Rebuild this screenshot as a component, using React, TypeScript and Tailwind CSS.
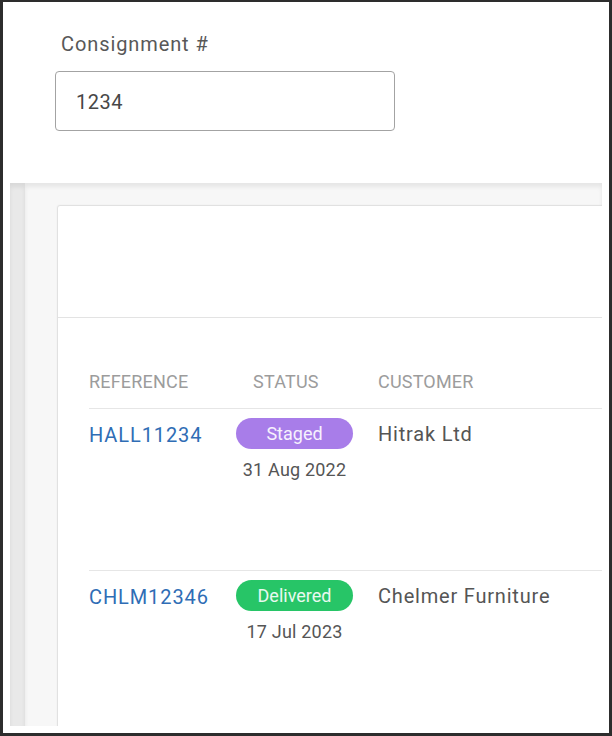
const ROWS = [
  {
    ref: "HALL11234",
    status: "Staged",
    badge: "bg-[#a87de9]",
    date: "31 Aug 2022",
    customer: "Hitrak Ltd",
  },
  {
    ref: "CHLM12346",
    status: "Delivered",
    badge: "bg-[#27c567]",
    date: "17 Jul 2023",
    customer: "Chelmer Furniture",
  },
] as const;

export default function App() {
  return (
    <div className="h-[736px] w-[612px] overflow-hidden bg-[#2d2d2d] pb-[3px] pl-[3px] pr-[3px] pt-[2px] font-['Roboto',sans-serif]">
      <div className="flex h-full flex-col overflow-hidden bg-white">
        {/* search form */}
        <div className="pl-[52px] pt-[30px]">
          <div className="pl-[6px] text-[20px] leading-6 tracking-[0.9px] text-[#585858]">Consignment #</div>
          <div className="mt-[15px] flex h-[60px] w-[340px] items-center rounded-[4px] border border-[#a3a3a3] pl-[20px] pt-[2px] text-[20px] tracking-[0.5px] text-[#474747]">
            1234
          </div>
        </div>

        {/* results panel */}
        <div className="mx-[7px] mt-[52px] flex h-[543px] overflow-hidden">
          <div className="w-[15px] shrink-0 bg-[#e9e9e9] shadow-[inset_0_4px_4px_rgba(0,0,0,0.07)]" />
          <div className="flex-1 overflow-hidden bg-[#f7f7f7] pl-[32px] pt-[22px] shadow-[inset_0_4px_4px_rgba(0,0,0,0.07)]">
            <div className="h-[700px] w-[620px] rounded-tl-[3px] border border-[#e1e1e1] bg-white shadow-[0_0_2px_rgba(0,0,0,0.06)]">
              <div className="h-[112px] border-b border-[#e3e3e3]" />

              <div className="pl-[31px]">
                <div className="flex border-b border-[#e6e6e6] pb-[14px] pt-[52px] text-[18px] leading-6 tracking-[0.2px] text-[#9c9c9c]">
                  <div className="w-[147px]">REFERENCE</div>
                  <div className="w-[142px] pl-[17px]">STATUS</div>
                  <div>CUSTOMER</div>
                </div>

                {ROWS.map((row, i) => (
                  <div
                    key={row.ref}
                    className={
                      i === 0
                        ? "flex h-[162px] items-start border-b border-[#e6e6e6] pt-[9px]"
                        : "flex h-[162px] items-start pt-[9px]"
                    }
                  >
                    <div className="w-[147px] pt-[2px] text-[20px] leading-[31px] tracking-[0.9px] text-[#2f6db5]">
                      {row.ref}
                    </div>
                    <div className="flex w-[117px] flex-col items-center">
                      <span
                        className={`flex h-[31px] w-[117px] items-center justify-center rounded-full text-[18px] text-white/90 ${row.badge}`}
                      >
                        {row.status}
                      </span>
                      <span className="mt-[9px] text-[18px] leading-6 tracking-[0.2px] text-[#555555]">{row.date}</span>
                    </div>
                    <div className="pl-[25px] pt-[1px] text-[20px] leading-[31px] tracking-[0.8px] text-[#555555]">
                      {row.customer}
                    </div>
                  </div>
                ))}
              </div>
            </div>
          </div>
        </div>
      </div>
    </div>
  );
}
